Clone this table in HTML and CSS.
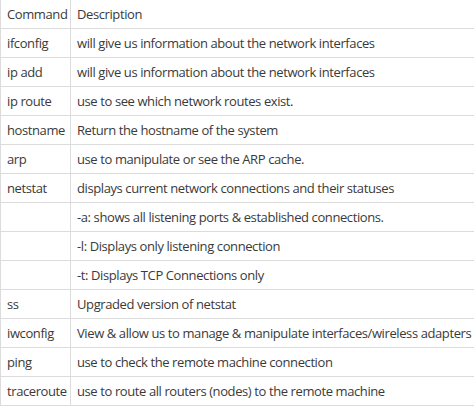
FILE: index.html
```html
<!DOCTYPE html>
<html>
<head>
<meta charset="utf-8">
<link rel="stylesheet" href="styles.css">
</head>
<body>
<table class="cmds">
  <tr class="head"><td class="cmd">Command</td><td class="desc">Description</td></tr>
  <tr><td class="cmd">ifconfig</td><td class="desc">will give us information about the network interfaces</td></tr>
  <tr><td class="cmd">ip add</td><td class="desc">will give us information about the network interfaces</td></tr>
  <tr><td class="cmd">ip route</td><td class="desc">use to see which network routes exist.</td></tr>
  <tr><td class="cmd">hostname</td><td class="desc">Return the hostname of the system</td></tr>
  <tr><td class="cmd">arp</td><td class="desc">use to manipulate or see the ARP cache.</td></tr>
  <tr><td class="cmd">netstat</td><td class="desc">displays current network connections and their statuses</td></tr>
  <tr><td class="cmd"></td><td class="desc">-a: shows all listening ports &amp; established connections.</td></tr>
  <tr><td class="cmd"></td><td class="desc">-l: Displays only listening connection</td></tr>
  <tr><td class="cmd"></td><td class="desc">-t: Displays TCP Connections only</td></tr>
  <tr><td class="cmd">ss</td><td class="desc">Upgraded version of netstat</td></tr>
  <tr><td class="cmd">iwconfig</td><td class="desc">View &amp; allow us to manage &amp; manipulate interfaces/wireless adapters</td></tr>
  <tr><td class="cmd">ping</td><td class="desc">use to check the remote machine connection</td></tr>
  <tr><td class="cmd">traceroute</td><td class="desc">use to route all routers (nodes) to the remote machine</td></tr>
</table>
</body>
</html>
```
FILE: styles.css
```css
html, body {
  margin: 0;
  padding: 0;
  background: #ffffff;
}
.cmds {
  border-collapse: collapse;
  width: 474px;
  table-layout: fixed;
  font-family: "Open Sans", "Noto Sans", sans-serif;
  font-size: 13px;
  letter-spacing: -0.4px;
  color: #3a3a3a;
}
.cmds td {
  height: 29px;
  padding: 0 0 0 6px;
  box-sizing: border-box;
  border-left: 1px solid #dcdcdc;
  border-bottom: 1px solid #dcdcdc;
  white-space: nowrap;
  vertical-align: middle;
  line-height: 18px;
}
.cmds .head td {
  height: 28px;
}
.cmds .cmd {
  width: 70px;
}
```
